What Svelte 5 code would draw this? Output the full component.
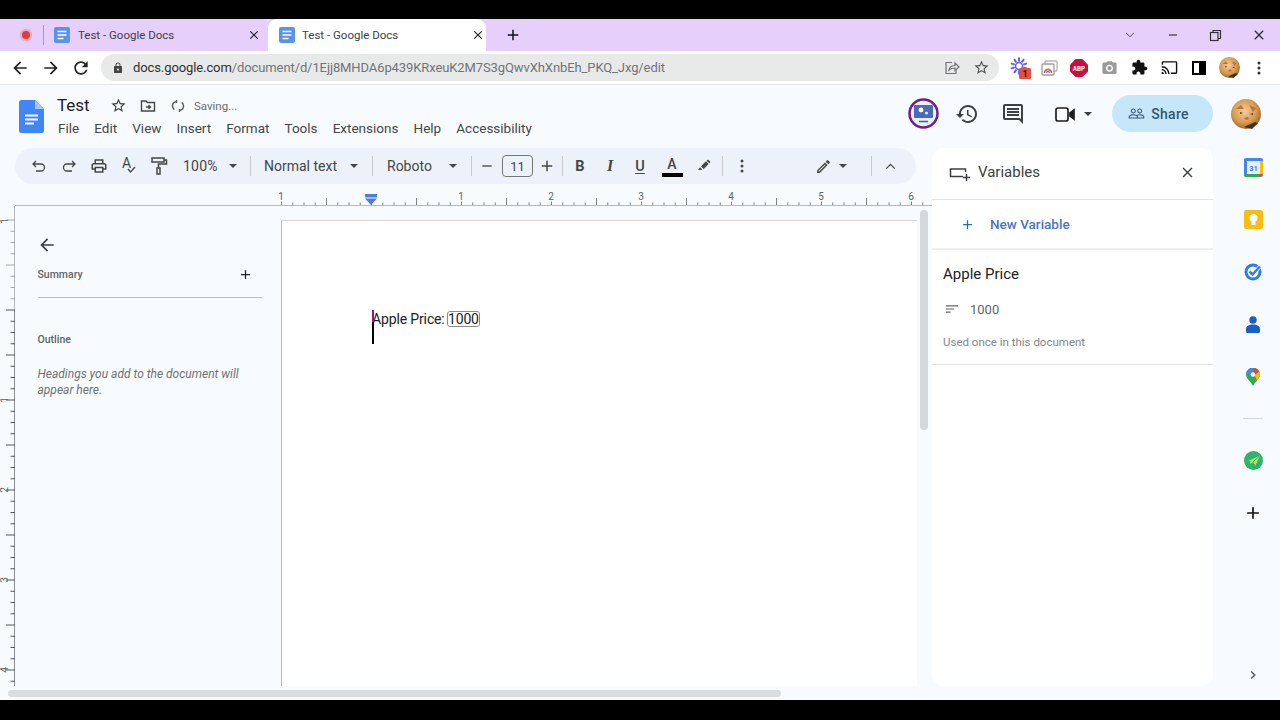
<script>
  const P = {
    back: 'M20 11H7.83l5.59-5.59L12 4l-8 8 8 8 1.41-1.41L7.83 13H20v-2z',
    fwd: 'M12 4l-1.41 1.41L16.17 11H4v2h12.17l-5.58 5.59L12 20l8-8z',
    reload: 'M17.65 6.35C16.2 4.9 14.21 4 12 4c-4.42 0-7.99 3.58-7.99 8s3.57 8 7.99 8c3.73 0 6.84-2.55 7.73-6h-2.08c-.82 2.33-3.04 4-5.65 4-3.31 0-6-2.69-6-6s2.69-6 6-6c1.66 0 3.14.69 4.22 1.78L13 11h7V4l-2.35 2.35z',
    lock: 'M18 8h-1V6c0-2.76-2.24-5-5-5S7 3.24 7 6v2H6c-1.1 0-2 .9-2 2v10c0 1.1.9 2 2 2h12c1.1 0 2-.9 2-2V10c0-1.1-.9-2-2-2zm-6 9c-1.1 0-2-.9-2-2s.9-2 2-2 2 .9 2 2-.9 2-2 2zm3.1-9H8.9V6c0-1.71 1.39-3.1 3.1-3.1 1.71 0 3.1 1.39 3.1 3.1v2z',
    star: 'M22 9.24l-7.19-.62L12 2 9.19 8.63 2 9.24l5.46 4.73L5.82 21 12 17.27 18.18 21l-1.63-7.03L22 9.24zM12 15.4l-3.76 2.27 1-4.28-3.32-2.88 4.38-.38L12 6.1l1.71 4.04 4.38.38-3.32 2.88 1 4.28L12 15.4z',
    puzzle: 'M20.5 11H19V7c0-1.1-.9-2-2-2h-4V3.5C13 2.12 11.88 1 10.5 1S8 2.12 8 3.5V5H4c-1.1 0-1.99.9-1.99 2v3.8H3.5c1.49 0 2.7 1.21 2.7 2.7s-1.21 2.7-2.7 2.7H2V20c0 1.1.9 2 2 2h3.8v-1.5c0-1.49 1.21-2.7 2.7-2.7 1.49 0 2.7 1.21 2.7 2.7V22H17c1.1 0 2-.9 2-2v-4h1.5c1.38 0 2.5-1.12 2.5-2.5S21.88 11 20.5 11z',
    cast: 'M21 3H3c-1.1 0-2 .9-2 2v3h2V5h18v14h-7v2h7c1.1 0 2-.9 2-2V5c0-1.1-.9-2-2-2zM1 18v3h3c0-1.66-1.34-3-3-3zm0-4v2c2.76 0 5 2.24 5 5h2c0-3.87-3.13-7-7-7zm0-4v2c4.97 0 9 4.03 9 9h2c0-6.08-4.93-11-11-11z',
    camera: 'M9 3L7.17 5H4c-1.1 0-2 .9-2 2v12c0 1.1.9 2 2 2h16c1.1 0 2-.9 2-2V7c0-1.1-.9-2-2-2h-3.17L15 3H9zm3 15c-2.76 0-5-2.24-5-5s2.24-5 5-5 5 2.24 5 5-2.24 5-5 5zm0-8a3 3 0 1 0 0 6 3 3 0 0 0 0-6z',
    history: 'M13 3c-4.97 0-9 4.03-9 9H1l3.89 3.89.07.14L9 12H6c0-3.87 3.13-7 7-7s7 3.13 7 7-3.13 7-7 7c-1.93 0-3.68-.79-4.94-2.06l-1.42 1.42C8.27 19.99 10.51 21 13 21c4.97 0 9-4.03 9-9s-4.03-9-9-9zm-1 5v5l4.28 2.54.72-1.21-3.5-2.08V8H12z',
    comment: 'M21.99 4c0-1.1-.89-2-1.99-2H4c-1.1 0-2 .9-2 2v12c0 1.1.9 2 2 2h14l4 4-.01-18zM20 4v13.17L18.83 16H4V4h16zM6 12h12v2H6zm0-3h12v2H6zm0-3h12v2H6z',
    people: 'M16.5 13c-1.2 0-3.07.34-4.5 1-1.43-.67-3.3-1-4.5-1C5.33 13 1 14.08 1 16.25V19h22v-2.75c0-2.17-4.33-3.25-6.5-3.25zm-4 4.5h-10v-1.25c0-.54 2.56-1.75 5-1.75s5 1.21 5 1.75v1.25zm9 0H14v-1.25c0-.46-.2-.86-.52-1.22.88-.3 1.96-.53 3.02-.53 2.44 0 5 1.21 5 1.75v1.25zM7.5 12c1.93 0 3.5-1.57 3.5-3.5S9.43 5 7.5 5 4 6.57 4 8.5 5.57 12 7.5 12zm0-5.5c1.1 0 2 .9 2 2s-.9 2-2 2-2-.9-2-2 .9-2 2-2zm9 5.5c1.93 0 3.5-1.57 3.5-3.5S18.43 5 16.5 5 13 6.57 13 8.5s1.57 3.5 3.5 3.5zm0-5.5c1.1 0 2 .9 2 2s-.9 2-2 2-2-.9-2-2 .9-2 2-2z',
    print: 'M19 8h-1V3H6v5H5c-1.66 0-3 1.34-3 3v6h4v4h12v-4h4v-6c0-1.66-1.34-3-3-3zM8 5h8v3H8V5zm8 12v2H8v-4h8v2zm2-2v-2H6v2H4v-4c0-.55.45-1 1-1h14c.55 0 1 .45 1 1v4h-2z',
    pencil: 'M3 17.25V21h3.75L17.81 9.94l-3.75-3.75L3 17.25zM5.92 19H5v-.92l9.06-9.06.92.92L5.92 19zM20.71 5.63l-2.34-2.34c-.2-.2-.45-.29-.71-.29s-.51.1-.7.29l-1.83 1.83 3.75 3.75 1.83-1.83c.39-.39.39-1.02 0-1.41z',
    marker: 'M6 14l3 3-1 1H3l3-4zm1.5-1.5L15 5l4 4-7.5 7.5-4-4zM16 4l1.2-1.2c.4-.4 1-.4 1.4 0l2.6 2.6c.4.4.4 1 0 1.4L20 8l-4-4z',
    close: 'M19 6.41L17.59 5 12 10.59 6.41 5 5 6.41 10.59 12 5 17.59 6.41 19 12 13.41 17.59 19 19 17.59 13.41 12z',
    add: 'M19 13h-6v6h-2v-6H5v-2h6V5h2v6h6v2z',
    minus: 'M5 11h14v2H5z',
    lines: 'M4 7h16v1.6H4zM4 11.2h11v1.6H4zM4 15.4h6V17H4z',
    chevdown: 'M5.5 8.5L12 15l6.5-6.5',
    chevup: 'M6 15l6-6 6 6',
    chevright: 'M9 6l6 6-6 6'
  };
  const hticks = Array.from({ length: 58 }, (_, i) => i);
  const hlabels = [[266, '1'], [446, '1'], [536, '2'], [626, '3'], [716, '4'], [806, '5'], [896, '6']];
  const vticks = Array.from({ length: 43 }, (_, i) => i - 8);
  const vlabels = [[15, '1'], [194, '1'], [284, '2'], [374, '3'], [464, '4']];
  const burst = Array.from({ length: 10 }, (_, i) => i * 36);
</script>

{#snippet ic(d, s = 18, vb = 24)}
  <svg class="icon" width={s} height={s} viewBox="0 0 {vb} {vb}" fill="currentColor"><path {d} /></svg>
{/snippet}
{#snippet st(d, s = 18, w = 2)}
  <svg class="icon" width={s} height={s} viewBox="0 0 24 24" fill="none" stroke="currentColor" stroke-width={w}><path {d} /></svg>
{/snippet}
{#snippet caret()}
  <svg class="caret" width="8" height="4" viewBox="0 0 10 5" fill="currentColor"><path d="M0 0h10L5 5z" /></svg>
{/snippet}
{#snippet favicon()}
  <svg class="icon" width="16" height="16" viewBox="0 0 16 16"><rect width="16" height="16" rx="2" fill="#5b93e6" /><path d="M3.5 4.5h9M3.5 8h9M3.5 11.5h6" stroke="#fff" stroke-width="1.4" /></svg>
{/snippet}
{#snippet cat(s, id)}
  <svg class="icon" width={s} height={s} viewBox="0 0 30 30">
    <defs><radialGradient {id} cx="45%" cy="40%" r="65%"><stop offset="0" stop-color="#f2cd9c" /><stop offset=".6" stop-color="#d79a50" /><stop offset="1" stop-color="#8a6230" /></radialGradient></defs>
    <circle cx="15" cy="15" r="15" fill="url(#{id})" />
    <path d="M5 10l5-4 3 4zM18 6l7 3-3 4z" fill="#b9773a" />
    <path d="M9 13l3 1-3 1zM19 15l3-1v2z" fill="#5a3516" />
    <path d="M13 19l4-1 1 2-3 1z" fill="#cf5f48" />
    <path d="M13 28l11-5 3 1-6 6z" fill="#3d3328" />
  </svg>
{/snippet}

<div class="screen">
  <div class="letterbox"></div>

  <div class="tabstrip">
    <svg class="rec" width="14" height="14" viewBox="0 0 14 14"><circle cx="7" cy="7" r="6.200" fill="#f0aab2" /><circle cx="7" cy="7" r="4" fill="#d5404c" /></svg>
    <span class="tab-sep"></span>
    <div class="tab">
      {@render favicon()}
      <span class="tab-title">Test - Google Docs</span>
      {@render ic(P.close, 14)}
    </div>
    <div class="tab active">
      {@render favicon()}
      <span class="tab-title">Test - Google Docs</span>
      {@render ic(P.close, 14)}
    </div>
    <span class="newtab">{@render ic(P.add, 18)}</span>
    <div class="winctl">
      <span>{@render st(P.chevdown, 14, 1.500)}</span>
      <span>{@render ic(P.minus, 14)}</span>
      <span>
        <svg class="icon" width="13" height="13" viewBox="0 0 13 13" fill="none" stroke="currentColor" stroke-width="1.200"><rect x="1.500" y="3.500" width="7.500" height="8" /><path d="M4 3.500V1.500h7.500v8H9" /></svg>
      </span>
      <span>{@render ic(P.close, 16)}</span>
    </div>
  </div>

  <div class="omnibar">
    <div class="nav">
      <span>{@render ic(P.back, 20)}</span>
      <span>{@render ic(P.fwd, 20)}</span>
      <span>{@render ic(P.reload, 20)}</span>
    </div>
    <div class="urlpill">
      {@render ic(P.lock, 12)}
      <span class="url"><b>docs.google.com</b>/document/d/1Ejj8MHDA6p439KRxeuK2M7S3gQwvXhXnbEh_PKQ_Jxg/edit</span>
      <span class="pill-end">
        <svg class="icon" width="16" height="16" viewBox="0 0 16 16" fill="none" stroke="#70757a" stroke-width="1.200"><path d="M8 2.500H2v11h10v-4" /><path d="M5 10c.5-3 3-4.500 6-4.500V3l4 4-4 3.500V8c-2.500 0-4.500.5-6 2z" /></svg>
        {@render ic(P.star, 17)}
      </span>
    </div>
    <div class="exts">
      <span>
        <svg width="24" height="24" viewBox="0 0 24 24">
          {#each burst as a}
            <path d="M10 1.500v4" stroke="#6a5be0" stroke-width="2" transform="rotate({a} 10 10)" />
          {/each}
          <circle cx="10" cy="10" r="3.500" fill="none" stroke="#6a5be0" stroke-width="1.500" />
          <rect x="10" y="12" width="12" height="11" rx="1.500" fill="#e2513e" />
          <text x="16" y="21" class="badge">1</text>
        </svg>
      </span>
      <span>
        <svg width="18" height="18" viewBox="0 0 18 18" fill="none"><rect x="5" y="2" width="12" height="10" rx="1" stroke="#b5b5b5" stroke-width="1.300" /><rect x="2" y="5" width="12" height="11" rx="1" fill="#fff" stroke="#9d9d9d" stroke-width="1.300" /><path d="M4.500 14a3.500 3.500 0 0 1 7 0" stroke="#db6a5b" stroke-width="1.800" /><path d="M6.500 14a1.500 1.500 0 0 1 3 0" stroke="#5a95dc" stroke-width="1.500" /></svg>
      </span>
      <span>
        <svg width="18" height="18" viewBox="0 0 16 16"><path d="M5 0h6l5 5v6l-5 5H5l-5-5V5z" fill="#c8103f" /><text x="8" y="10.800" class="abp">ABP</text></svg>
      </span>
      <span class="cam">{@render ic(P.camera, 17)}</span>
      <span class="ink">{@render ic(P.puzzle, 17)}</span>
      <span class="ink">{@render ic(P.cast, 17)}</span>
      <span class="ink">
        <svg width="14" height="14" viewBox="0 0 14 14"><rect x="1" y="1" width="12" height="12" fill="#fff" stroke="#000" stroke-width="2" /><rect x="7" y="1" width="6" height="12" fill="#000" /></svg>
      </span>
      <span>{@render cat(21, 'catA')}</span>
      <span class="ink">
        <svg width="4" height="14" viewBox="0 0 4 14" fill="#333"><circle cx="2" cy="2" r="1.500" /><circle cx="2" cy="7" r="1.500" /><circle cx="2" cy="12" r="1.500" /></svg>
      </span>
    </div>
  </div>

  <div class="docs">
    <header class="head">
      <svg class="logo" width="25" height="33" viewBox="0 0 25 33"><path d="M2.500 0H16l9 9v21.500a2.500 2.500 0 0 1-2.500 2.500h-20A2.500 2.500 0 0 1 0 30.500v-28A2.500 2.500 0 0 1 2.500 0z" fill="#4285f4" /><path d="M16 0l9 9h-9z" fill="#a6c5fa" /><path d="M6 15.500h13M6 19.500h13M6 23.500h9" stroke="#fff" stroke-width="1.800" /></svg>
      <div class="titles">
        <div class="title-row">
          <span class="doc-title">Test</span>
          <span class="ti star">{@render ic(P.star, 17)}</span>
          <span class="ti folder">
            <svg class="icon" width="16" height="16" viewBox="0 0 16 16" fill="none" stroke="#444746" stroke-width="1.400"><path d="M1.500 13V3h4.500l1.500 1.500h7V13z" /><path d="M6 9h4M8.500 7l2 2-2 2" /></svg>
          </span>
          <span class="ti sync">
            <svg class="icon" width="14" height="14" viewBox="0 0 14 14" fill="none" stroke="#5f6368" stroke-width="1.500"><path d="M5.500 2.500C3 3 1.500 5 1.500 7c0 1.500.7 2.800 1.800 3.700M8.500 11.500C11 11 12.500 9 12.500 7c0-1.500-.7-2.800-1.800-3.700" /><path d="M5.500 1v3M8.500 10v3" /></svg>
          </span>
          <span class="saving">Saving...</span>
        </div>
        <nav class="menu">
          <span>File</span><span>Edit</span><span>View</span><span>Insert</span><span>Format</span><span>Tools</span><span>Extensions</span><span>Help</span><span>Accessibility</span>
        </nav>
      </div>
      <div class="head-right">
        <svg class="addon" width="31" height="31" viewBox="0 0 31 31"><circle cx="15.500" cy="15.500" r="14" fill="#e8f0fe" stroke="#7b1a7e" stroke-width="2.500" /><rect x="6" y="7" width="19" height="13" rx="1" fill="#4a6bb5" /><circle cx="13" cy="12" r="2.400" fill="#fff" /><circle cx="18.500" cy="15" r="1.600" fill="#dfe7f7" /><path d="M11 23.500h9" stroke="#4a5a85" stroke-width="1.500" /></svg>
        <span class="hi first">{@render ic(P.history, 24)}</span>
        <span class="hi">{@render ic(P.comment, 24)}</span>
        <span class="video">
          <svg class="icon" width="22" height="18" viewBox="0 0 22 18" fill="none" stroke="#1f1f1f" stroke-width="1.700"><path d="M2 5a2 2 0 0 1 2-2h8a2 2 0 0 1 2 2v9a2 2 0 0 1-2 2H4a2 2 0 0 1-2-2z" /><path d="M16 8l4-3v9l-4-3z" fill="#1f1f1f" /></svg>
          {@render caret()}
        </span>
        <button class="share">{@render ic(P.people, 17)}<span>Share</span></button>
        <span class="me">{@render cat(30, 'catB')}</span>
      </div>
    </header>

    <div class="main">
      <div class="workarea">
        <div class="toolbar">
          <span class="tb"><svg class="icon" width="16" height="16" viewBox="0 0 16 16" fill="none" stroke="currentColor" stroke-width="1.300"><path d="M5 3L2 6l3 3M2 6h8a3.500 3.500 0 0 1 0 7H5" /></svg></span>
          <span class="tb"><svg class="icon" width="16" height="16" viewBox="0 0 16 16" fill="none" stroke="currentColor" stroke-width="1.300"><path d="M11 3l3 3-3 3M14 6H6a3.500 3.500 0 0 0 0 7h5" /></svg></span>
          <span class="tb">{@render ic(P.print, 18)}</span>
          <span class="tb spell"><i>A</i><svg class="check" width="9" height="7" viewBox="0 0 9 7" fill="none" stroke="currentColor" stroke-width="1.300"><path d="M1 3l2.500 3L8 1" /></svg></span>
          <span class="tb"><svg class="icon" width="18" height="20" viewBox="0 0 18 20" fill="none" stroke="currentColor" stroke-width="1.500"><rect x="2" y="2" width="12" height="4" /><path d="M14 4h2.500v4H8.500v4" /><rect x="7" y="12" width="3" height="6" /></svg></span>
          <span class="dd zoom">100%{@render caret()}</span>
          <span class="sep"></span>
          <span class="dd style">Normal text{@render caret()}</span>
          <span class="sep"></span>
          <span class="dd font">Roboto{@render caret()}</span>
          <span class="sep"></span>
          <span class="tb">{@render ic(P.minus, 16)}</span>
          <span class="fontsize">11</span>
          <span class="tb narrow">{@render ic(P.add, 18)}</span>
          <span class="sep s-fmt"></span>
          <span class="tb fmt b">B</span>
          <span class="tb fmt i">I</span>
          <span class="tb fmt u">U</span>
          <span class="tb fmt color"><span>A</span></span>
          <span class="tb mk">{@render ic(P.marker, 16)}</span>
          <span class="sep mid"></span>
          <span class="tb more">
            <svg width="4" height="14" viewBox="0 0 4 14" fill="#444746"><circle cx="2" cy="2" r="1.500" /><circle cx="2" cy="7" r="1.500" /><circle cx="2" cy="12" r="1.500" /></svg>
          </span>
          <span class="pencil">{@render ic(P.pencil, 17)}{@render caret()}</span>
          <span class="sep"></span>
          <span class="tb end">{@render st(P.chevup, 17, 1.800)}</span>
        </div>

        <svg class="hruler" width="917" height="22" viewBox="0 0 917 22">
          <path d="M0 21.500H917" stroke="#b7b9bc" />
          {#each hticks as i}
            <path d="M{266.5 + i * 11.25} {i % 8 === 0 ? 17.500 : i % 4 === 0 ? 14 : 18.500}V21" stroke="#7f8286" />
          {/each}
          {#each hlabels as [x, t]}
            <text x={x} y="16" class="rlabel">{t}</text>
          {/each}
        </svg>
        <svg class="marker" width="12" height="11" viewBox="0 0 12 11"><rect x="0" y="0" width="12" height="3.500" fill="#4a7fdd" /><path d="M0 4.500h12L6 11z" fill="#4a7fdd" /></svg>

        <div class="editor">
          <svg class="vruler" width="15" height="480" viewBox="0 0 15 480">
            <path d="M14.500 0V104" stroke="#b7b9bc" /><path d="M14.500 104V480" stroke="#8a8d91" />
            {#each vticks as i}
              <path d="M{i % 4 === 0 ? 6 : 10.500} {104 + i * 11.25}H15" stroke={i < 0 ? '#a6a8ab' : '#55585c'} />
            {/each}
            {#each vlabels as [y, t]}
              <text x="0" y="0" class="rlabel" transform="translate(8 {y}) rotate(-90)">{t}</text>
            {/each}
          </svg>
          <aside class="outline">
            <span class="side-back">{@render ic(P.back, 20)}</span>
            <div class="summary"><span class="label">Summary</span><span class="plus">{@render ic(P.add, 15)}</span></div>
            <div class="label outline-label">Outline</div>
            <p class="hint">Headings you add to the document will appear here.</p>
          </aside>
          <div class="page-area">
            <div class="page">
              <div class="line"><span class="caretbar"></span>Apple Price: <span class="chip">1000</span></div>
            </div>
          </div>
          <div class="vscroll"><span></span></div>
        </div>
      </div>

      <section class="panel">
        <div class="panel-head">
          <svg class="icon" width="22" height="14" viewBox="0 0 22 14" fill="none" stroke="#3c4043" stroke-width="1.500"><path d="M14 9.500H1.500V2h15v3" /><path d="M14 10.500h7M17.500 7v7" /></svg>
          <span class="panel-title">Variables</span>
          <span class="panel-close">{@render ic(P.close, 17)}</span>
        </div>
        <div class="newvar">
          {@render ic(P.add, 15)}
          <span>New Variable</span>
        </div>
        <div class="var">
          <div class="var-name">Apple Price</div>
          <div class="var-value">{@render ic(P.lines, 18)}<span>1000</span></div>
          <div class="var-use">Used once in this document</div>
        </div>
      </section>

      <aside class="rail">
        <svg width="19" height="19" viewBox="0 0 19 19"><rect width="19" height="19" rx="2" fill="#4285f4" /><rect x="3" y="3" width="13" height="13" fill="#e8f0fe" /><path d="M16 3h3v13h-3z" fill="#fbbc04" /><path d="M0 16h16v3H2a2 2 0 0 1-2-2z" fill="#34a853" /><path d="M16 16h3l-3 3z" fill="#ea4335" /><text x="9.500" y="12.500" class="cal">31</text></svg>
        <svg width="19" height="19" viewBox="0 0 19 19"><rect width="19" height="19" rx="2" fill="#f7bd15" /><circle cx="9.500" cy="8" r="4" fill="#fff" /><rect x="7.500" y="12" width="4" height="3" fill="#fff" /></svg>
        <svg width="18" height="18" viewBox="0 0 18 18" fill="none"><circle cx="9" cy="9" r="7" stroke="#2b7de9" stroke-width="3" /><path d="M5.500 8.500L8.500 11.500L16.500 3" stroke="#fff" stroke-width="4" /><path d="M5.500 8.500L8.500 11.500L16 3.500" stroke="#2b7de9" stroke-width="2.500" /></svg>
        <svg width="14" height="17" viewBox="0 0 14 17"><circle cx="7" cy="4" r="3.700" fill="#1a5fc9" /><path d="M0 13c0-3 3-4.500 7-4.500s7 1.500 7 4.500v2.500a1.500 1.500 0 0 1-1.500 1.500h-11A1.500 1.500 0 0 1 0 15.500z" fill="#1a5fc9" /></svg>
        <svg width="14" height="18" viewBox="0 0 14 18"><path d="M7 18C5 14 0 10.500 0 6.500a7 7 0 0 1 14 0C14 10.500 9 14 7 18z" fill="#34a853" /><path d="M2 2A7 7 0 0 1 7 0v4.500A2.500 2.500 0 0 0 4.800 6L0 6.500C0 5 1 3 2 2z" fill="#4285f4" /><path d="M7 0a7 7 0 0 1 6 3.500L9 6a2.500 2.500 0 0 0-2-1.500z" fill="#ea4335" /><path d="M13 3.500c.7 1 1 2 1 3 0 2-1.500 4-3 6L8.800 7.500z" fill="#fbbc04" /><circle cx="7" cy="6.500" r="2.300" fill="#fff" /></svg>
        <span class="rail-sep"></span>
        <svg class="green" width="19" height="19" viewBox="0 0 19 19"><circle cx="9.500" cy="9.500" r="9.500" fill="#2db36b" /><path d="M3 10.500l13-6-4.500 10-2.500-3.500-3 2.500.5-3.500z" fill="#b4e65a" /><path d="M16 4.500L9 11" stroke="#2db36b" /></svg>
        <span class="rail-add">{@render ic(P.add, 20)}</span>
        <span class="rail-chev">{@render st(P.chevright, 14, 2.400)}</span>
      </aside>
    </div>

    <div class="hscroll"><span></span></div>
  </div>

  <div class="letterbox bottom"></div>
</div>

<style>
  :global(body) { margin: 0; background: #000; }
  .screen { width: 1280px; height: 720px; display: flex; flex-direction: column; font-family: Roboto, "Liberation Sans", sans-serif; color: #3c4043; overflow: hidden; position: relative; }
  .icon { display: block; flex: none; }
  .letterbox { height: 19px; background: #000; flex: none; }
  .letterbox.bottom { height: 20px; }

  .tabstrip { height: 32px; background: #e6d0fb; display: flex; align-items: center; flex: none; color: #222; }
  .rec { margin-left: 19px; }
  .tab-sep { width: 1px; height: 20px; background: #a79ab5; margin-left: 10px; }
  .tab { height: 32px; display: flex; align-items: center; padding-left: 10px; padding-right: 7px; box-sizing: border-box; width: 224px; }
  .tab.active { background: #fff; border-radius: 9px 9px 0 0; width: 218px; padding-left: 11px; padding-right: 1px; }
  .tab-title { flex: 1; font-size: 11.500px; margin-left: 8px; color: #3c4043; }
  .tab.active .tab-title { margin-left: 7px; }
  .newtab { margin-left: 18px; color: #111; }
  .winctl { margin-left: auto; display: flex; color: #333; }
  .winctl span { width: 43px; height: 32px; display: flex; align-items: center; justify-content: center; }

  .omnibar { height: 33px; background: #fff; display: flex; align-items: center; flex: none; border-bottom: 1px solid #e3e5e7; }
  .nav { display: flex; width: 101px; padding-left: 5px; box-sizing: border-box; color: #222; }
  .nav span { width: 30.500px; display: flex; justify-content: center; }
  .urlpill { width: 898px; height: 27px; background: #e8e9e9; border-radius: 14px; display: flex; align-items: center; padding-left: 11px; box-sizing: border-box; color: #444; }
  .url { font-size: 13px; margin-left: 9px; color: #70757a; letter-spacing: -.1px; white-space: nowrap; }
  .url b { font-weight: 400; color: #303134; }
  .pill-end { margin-left: auto; display: flex; align-items: center; gap: 13px; padding-right: 9px; color: #555; }
  .exts { display: flex; margin-left: 5px; }
  .exts span { width: 30px; height: 30px; display: flex; align-items: center; justify-content: center; }
  .exts span:first-child { position: relative; left: 2px; }
  .badge { font: 700 9px Roboto, sans-serif; fill: #111; text-anchor: middle; }
  .abp { font: 700 5.600px Roboto, sans-serif; fill: #fff; text-anchor: middle; }
  .cam { color: #9a9a9a; }
  .ink { color: #111; }

  .docs { flex: 1; background: #f8fbfd; display: flex; flex-direction: column; min-height: 0; }
  .head { height: 63px; display: flex; flex: none; position: relative; }
  .logo { margin: 15px 0 0 19px; }
  .titles { margin-left: 13px; padding-top: 10px; }
  .title-row { display: flex; align-items: center; height: 21px; }
  .doc-title { font-size: 17px; color: #1f1f1f; width: 53px; margin-top: -1px; }
  .ti { display: flex; justify-content: center; color: #3c4043; }
  .star { margin-left: -1px; width: 18px; }
  .folder { margin-left: 8px; margin-right: -1px; width: 26px; }
  .sync { width: 20px; margin-left: 8px; margin-right: 1px; }
  .saving { font-size: 11.500px; color: #6b6f74; margin-left: 5px; }
  .menu { display: flex; gap: 15.100px; font-size: 13.500px; color: #444746; margin-top: 1px; margin-left: 1px; line-height: 22px; }

  .head-right { margin-left: auto; display: flex; align-items: center; height: 37px; margin-top: 10px; }
  .addon { margin-right: 20px; }
  .hi { width: 46px; display: flex; justify-content: center; color: #3c4043; }
  .hi.first { margin-left: -15px; }
  .video { display: flex; align-items: center; gap: 8px; margin-left: 18px; width: 58px; color: #3c4043; }
  .share { width: 101px; height: 37px; border: 0; border-radius: 19px; background: #c6e7fa; display: flex; align-items: center; justify-content: center; gap: 6px; font: 500 14px Roboto, sans-serif; letter-spacing: .3px; color: #35566f; padding: 0 8px 0 0; box-sizing: border-box; }
  .me { width: 67px; display: flex; padding-left: 18px; box-sizing: border-box; }

  .main { display: flex; flex: 1; min-height: 0; }
  .workarea { width: 932px; flex: none; position: relative; display: flex; flex-direction: column; }
  .toolbar { margin-left: 15px; width: 901px; height: 36px; flex: none; background: #edf2fa; border-radius: 18px; display: flex; align-items: center; padding-left: 9px; box-sizing: border-box; color: #444746; font-size: 14px; }
  .tb { width: 30px; height: 28px; flex: none; display: flex; align-items: center; justify-content: center; position: relative; }
  .tb.narrow { width: 28px; }
  .sep { width: 1px; height: 20px; background: #c7c9cc; flex: none; }
  .s-fmt { margin-left: 1px; }
  .dd { display: flex; align-items: center; flex: none; box-sizing: border-box; }
  .zoom { width: 76px; padding-left: 9px; gap: 11px; letter-spacing: .2px; }
  .style { width: 121px; padding-left: 13px; justify-content: space-between; padding-right: 14px; }
  .font { width: 98px; padding-left: 14px; justify-content: space-between; padding-right: 14px; }
  .fontsize { width: 31px; height: 22px; box-sizing: border-box; border: 1px solid #747775; border-radius: 4px; display: flex; align-items: center; justify-content: center; font-size: 13px; flex: none; }
  .fmt { font-size: 14.500px; }
  .b { font-weight: 700; margin-left: 2px; }
  .i { font-family: "Liberation Serif", serif; font-style: italic; font-size: 16px; font-weight: 700; }
  .u { text-decoration: underline; text-underline-offset: 2px; font-weight: 500; }
  .color { flex-direction: column; margin-left: 2px; }
  .color span { font-weight: 500; font-size: 14px; line-height: 14px; border-bottom: 4px solid #000; width: 21px; text-align: center; padding-bottom: 2px; margin-top: 1px; }
  .mk { margin-left: 2px; }
  .spell { font-size: 14px; }
  .spell i { font-style: normal; margin: -6px 5px 0 0; }
  .check { position: absolute; left: 13px; top: 14px; }
  .sep.mid { margin-left: 3px; }
  .more { margin-left: 4px; }
  .pencil { display: flex; align-items: center; gap: 7px; padding-left: 58px; width: 32px; margin-right: 24px; flex: none; }
  .end { margin-left: 3px; }

  .hruler { display: block; margin-left: 15px; flex: none; }
  .rlabel { font: 400 10px Roboto, sans-serif; fill: #5f6368; text-anchor: middle; }
  .marker { position: absolute; left: 365px; top: 46px; }

  .editor { flex: 1; display: flex; min-height: 0; overflow: hidden; }
  .vruler { flex: none; display: block; }
  .outline { width: 266px; flex: none; padding: 29px 19px 0 22.500px; box-sizing: border-box; }
  .side-back { display: block; margin-left: -1px; height: 20px; color: #3c4043; }
  .summary { display: flex; align-items: center; justify-content: space-between; height: 22px; margin-top: 8px; border-bottom: 1px solid #bcc0c4; padding-bottom: 12px; }
  .plus { color: #1f1f1f; margin-right: 9px; }
  .label { font-size: 10.500px; font-weight: 500; color: #5f6368; }
  .outline-label { margin-top: 35px; }
  .hint { margin: 20px 0 0; font-size: 12px; line-height: 16px; font-style: italic; color: #6d7175; }

  .page-area { width: 636px; flex: none; padding-top: 14px; box-sizing: border-box; }
  .page { height: 100%; background: #fff; border-top: 1px solid #d4d6d8; border-left: 1px solid #b3b5b8; box-sizing: border-box; padding: 89px 0 0 90px; }
  .line { font-size: 14px; line-height: 18px; color: #202124; letter-spacing: -.14px; position: relative; }
  .chip { display: inline-block; border: 1px solid #8a8c8f; border-radius: 3px; line-height: 14px; margin-left: -1px; }
  .caretbar { position: absolute; left: 0; top: 0; width: 2px; height: 34px; background: linear-gradient(#a5157f 36%, #000 36%); }
  .vscroll { flex: 1; padding: 4px 0 0 3px; box-sizing: border-box; }
  .vscroll span { display: block; width: 8px; height: 220px; background: #d6d9dc; border-radius: 4px; }

  .panel { width: 281px; flex: none; background: #fff; border-radius: 12px; box-sizing: border-box; }
  .panel-head { height: 52px; border-bottom: 1px solid #e2e3e5; box-sizing: border-box; display: flex; align-items: center; padding: 0 17px; }
  .panel-title { font-size: 15px; color: #3c4043; margin-left: 7px; margin-top: -3px; }
  .panel-close { margin-left: auto; color: #3c4043; margin-top: -2px; }
  .newvar { height: 50px; border-bottom: 2px solid #eceff1; box-sizing: border-box; display: flex; align-items: center; padding-left: 28px; color: #1a6fb8; gap: 15px; }
  .newvar span { font-size: 13.500px; font-weight: 500; color: #4a74c4; }
  .var { padding: 14px 0 0 11px; height: 115px; border-bottom: 1px solid #e2e3e5; box-sizing: border-box; }
  .var-name { font-size: 15px; color: #202124; line-height: 21px; }
  .var-value { display: flex; align-items: center; gap: 9px; margin-top: 14px; font-size: 13px; color: #5f6368; height: 20px; }
  .var-use { font-size: 11.500px; color: #80868b; margin-top: 16px; }

  .rail { flex: 1; display: flex; flex-direction: column; align-items: center; padding: 10px 0 0 13px; }
  .rail > svg:nth-child(2) { margin-top: 33px; }
  .rail > svg:nth-child(3) { margin-top: 34px; }
  .rail > svg:nth-child(4) { margin-top: 35px; }
  .rail > svg:nth-child(5) { margin-top: 35px; }
  .cal { font: 700 7.500px Roboto, sans-serif; fill: #4285f4; text-anchor: middle; }
  .rail-sep { width: 20px; height: 1px; background: #d4d6d8; margin-top: 32px; }
  .green { margin-top: 32px; }
  .rail-add { margin-top: 33px; color: #111; }
  .rail-chev { margin-top: auto; margin-bottom: 4px; color: #555; }

  .hscroll { height: 14px; flex: none; padding: 4px 0 0 8px; box-sizing: border-box; }
  .hscroll span { display: block; width: 773px; height: 7px; background: #dadcde; border-radius: 4px; }
</style>
